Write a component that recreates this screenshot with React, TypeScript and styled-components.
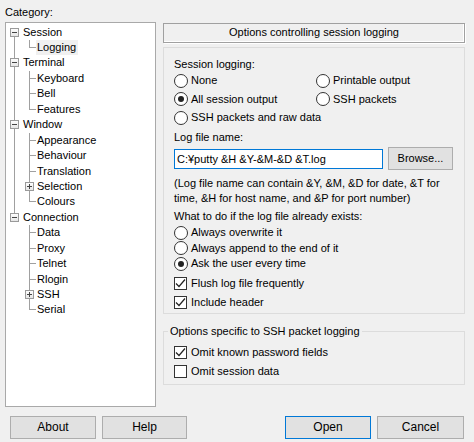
import React from "react";
import styled, { createGlobalStyle, css } from "styled-components";

const Global = createGlobalStyle`
  html, body { margin: 0; padding: 0; background: #f0f0f0; }
  body { font-family: "Liberation Sans", Arial, sans-serif; font-size: 11px; color: #000; }
  * { box-sizing: border-box; }
`;

const Page = styled.div`
  width: 474px;
  height: 442px;
  display: grid;
  grid-template-columns: 151px 302px;
  grid-template-rows: auto auto;
  column-gap: 7px;
  padding: 0 9px 0 5px;
`;

const LeftColumn = styled.div`
  padding-top: 5px;
  display: flex;
  flex-direction: column;
`;

const CategoryLabel = styled.div`
  line-height: 15px;
  height: 15px;
  margin-bottom: 2px;
`;

const TreeBox = styled.div`
  height: 385px;
  background: #fff;
  border: 1px solid #a9a9a9;
  padding-top: 1.6px;
`;

const TreeRow = styled.div`
  display: flex;
  align-items: stretch;
  height: 15.44px;
  line-height: 15px;
  white-space: nowrap;
`;

type GuideProps = { $w: number; $up?: boolean; $down?: boolean; $right?: boolean };

const Guide = styled.span<GuideProps>`
  position: relative;
  flex: none;
  width: ${(p) => p.$w}px;
  ${(p) =>
    (p.$up || p.$down) &&
    css`
      &::before {
        content: "";
        position: absolute;
        left: ${Math.floor(p.$w / 2)}px;
        top: ${p.$up ? "0" : "50%"};
        bottom: ${p.$down ? "0" : "50%"};
        border-left: 1px solid #a0a0a0;
      }
    `}
  ${(p) =>
    p.$right &&
    css`
      &::after {
        content: "";
        position: absolute;
        left: ${Math.floor(p.$w / 2)}px;
        right: 0;
        top: 7px;
        border-top: 1px solid #a0a0a0;
      }
    `}
`;

const ExpandBox = styled.span<{ $w: number; $plus?: boolean }>`
  position: absolute;
  z-index: 1;
  left: ${(p) => Math.floor(p.$w / 2) - 4}px;
  top: 3px;
  width: 9px;
  height: 9px;
  border: 1px solid #9a9a9a;
  background: linear-gradient(#fdfdfd, #e6e6e6);
  &::before {
    content: "";
    position: absolute;
    left: 1px;
    right: 1px;
    top: 3px;
    border-top: 1px solid #444;
  }
  ${(p) =>
    p.$plus &&
    css`
      &::after {
        content: "";
        position: absolute;
        top: 1px;
        bottom: 1px;
        left: 3px;
        border-left: 1px solid #444;
      }
    `}
`;

const TreeLabel = styled.span<{ $selected?: boolean }>`
  padding: 0 2px 0 1px;
  margin-left: 0;
  ${(p) => p.$selected && css`background: #f0f0f0;`}
`;

const RightColumn = styled.div`
  padding-top: 23px;
  display: flex;
  flex-direction: column;
`;

const HeaderBox = styled.div`
  height: 20px;
  border: 1px solid #a0a0a0;
  box-shadow: inset -1px -1px 0 #fff, 1px 1px 0 #fff;
  text-align: center;
  line-height: 17px;
`;

const Group = styled.div`
  margin-top: 4px;
  height: 267px;
  border: 1px solid #dcdcdc;
  padding: 8.5px 8px 0 10px;
`;

const Text = styled.div<{ $mt?: number }>`
  line-height: 15px;
  margin-top: ${(p) => p.$mt ?? 0}px;
  white-space: nowrap;
`;

const RadioGrid = styled.div`
  display: grid;
  grid-template-columns: 142px auto;
  grid-auto-rows: 18.6px;
`;

const OptionList = styled.div<{ $row: number; $mt?: number }>`
  display: grid;
  grid-auto-rows: ${(p) => p.$row}px;
  margin-top: ${(p) => p.$mt ?? 0}px;
`;

const Option = styled.label`
  display: flex;
  align-items: center;
  gap: 3px;
  white-space: nowrap;
  line-height: 15px;
`;

const RadioCircle = styled.span<{ $on?: boolean }>`
  flex: none;
  width: 14px;
  height: 14px;
  border-radius: 50%;
  border: 1px solid #333;
  background: #fff;
  display: flex;
  align-items: center;
  justify-content: center;
  &::after {
    content: "";
    width: 6px;
    height: 6px;
    border-radius: 50%;
    background: ${(p) => (p.$on ? "#222" : "transparent")};
  }
`;

const CheckSquare = styled.span`
  flex: none;
  width: 13px;
  height: 13px;
  border: 1px solid #333;
  background: #fff;
  margin-right: 1px;
  display: flex;
  align-items: center;
  justify-content: center;
`;

const FileRow = styled.div`
  display: flex;
  align-items: center;
  gap: 5px;
  height: 23px;
  margin-top: 2.5px;
`;

const FileInput = styled.div`
  width: 209px;
  height: 20px;
  border: 1px solid #0078d7;
  background: #fff;
  padding-left: 2px;
  line-height: 18px;
  white-space: nowrap;
`;

const Button = styled.div<{ $w: number; $default?: boolean }>`
  width: ${(p) => p.$w}px;
  height: 23px;
  flex: none;
  background: #e1e1e1;
  border: 1px solid ${(p) => (p.$default ? "#0078d7" : "#adadad")};
  text-align: center;
  line-height: 21px;
  font-size: 12px;
`;

const BrowseButton = styled(Button)`
  font-size: 11px;
`;

const FieldGroup = styled.fieldset`
  margin: 9.5px 0 0;
  padding: 0 8px 2px 4px;
  border: 1px solid #dcdcdc;
  min-width: 0;
  legend {
    padding: 0 2px;
    line-height: 15px;
  }
`;

const Legend = styled.legend`
  padding: 0 2px;
  line-height: 15px;
  font-size: 11px;
`;

const ButtonBar = styled.div`
  grid-column: 1 / -1;
  margin-top: 6px;
  display: flex;
  justify-content: space-between;
  padding: 0 1px 0 5px;
`;

const ButtonPair = styled.div`
  display: flex;
  gap: 6px;
`;

const Check = () => (
  <svg width="11" height="11" viewBox="0 0 11 11">
    <path d="M1 5.5 L4 8.5 L10 1.5" fill="none" stroke="#222" strokeWidth="1.2" />
  </svg>
);

type G = { up?: boolean; down?: boolean; right?: boolean; box?: "+" | "-" } | null;
type Row = { label: string; c1: G; c2?: G; selected?: boolean };

const thru: G = { up: true, down: true };
const tee: G = { up: true, down: true, right: true };
const elbow: G = { up: true, right: true };

const rows: Row[] = [
  { label: "Session", c1: { down: true, box: "-" } },
  { label: "Logging", c1: thru, c2: elbow, selected: true },
  { label: "Terminal", c1: { up: true, down: true, box: "-" } },
  { label: "Keyboard", c1: thru, c2: tee },
  { label: "Bell", c1: thru, c2: tee },
  { label: "Features", c1: thru, c2: elbow },
  { label: "Window", c1: { up: true, down: true, box: "-" } },
  { label: "Appearance", c1: thru, c2: tee },
  { label: "Behaviour", c1: thru, c2: tee },
  { label: "Translation", c1: thru, c2: tee },
  { label: "Selection", c1: thru, c2: { up: true, down: true, box: "+" } },
  { label: "Colours", c1: thru, c2: elbow },
  { label: "Connection", c1: { up: true, box: "-" } },
  { label: "Data", c1: null, c2: tee },
  { label: "Proxy", c1: null, c2: tee },
  { label: "Telnet", c1: null, c2: tee },
  { label: "Rlogin", c1: null, c2: tee },
  { label: "SSH", c1: null, c2: { up: true, down: true, box: "+" } },
  { label: "Serial", c1: null, c2: elbow },
];

const GuideCell = ({ g, w }: { g: G; w: number }) => (
  <Guide $w={w} $up={g?.up} $down={g?.down} $right={g?.right}>
    {g?.box && <ExpandBox $w={w} $plus={g.box === "+"} />}
  </Guide>
);

const Radio = ({ on, children }: { on?: boolean; children: React.ReactNode }) => (
  <Option>
    <RadioCircle $on={on} />
    {children}
  </Option>
);

const CheckBox = ({ on, children }: { on?: boolean; children: React.ReactNode }) => (
  <Option>
    <CheckSquare>{on && <Check />}</CheckSquare>
    {children}
  </Option>
);

export default function App() {
  return (
    <>
      <Global />
      <Page>
        <LeftColumn>
          <CategoryLabel>Category:</CategoryLabel>
          <TreeBox>
            {rows.map((r) => (
              <TreeRow key={r.label}>
                <GuideCell g={r.c1} w={16} />
                {r.c2 !== undefined && <GuideCell g={r.c2} w={14} />}
                <TreeLabel $selected={r.selected}>{r.label}</TreeLabel>
              </TreeRow>
            ))}
          </TreeBox>
        </LeftColumn>
        <RightColumn>
          <HeaderBox>Options controlling session logging</HeaderBox>
          <Group>
            <Text>Session logging:</Text>
            <RadioGrid>
              <Radio>None</Radio>
              <Radio>Printable output</Radio>
              <Radio on>All session output</Radio>
              <Radio>SSH packets</Radio>
              <Radio>SSH packets and raw data</Radio>
            </RadioGrid>
            <Text $mt={2.4}>Log file name:</Text>
            <FileRow>
              <FileInput>C:¥putty &amp;H &amp;Y-&amp;M-&amp;D &amp;T.log</FileInput>
              <BrowseButton $w={65}>Browse...</BrowseButton>
            </FileRow>
            <Text $mt={5.5}>
              (Log file name can contain &amp;Y, &amp;M, &amp;D for date, &amp;T for
              <br />
              time, &amp;H for host name, and &amp;P for port number)
            </Text>
            <Text $mt={3.5}>What to do if the log file already exists:</Text>
            <OptionList $row={15.6} $mt={0.7}>
              <Radio>Always overwrite it</Radio>
              <Radio>Always append to the end of it</Radio>
              <Radio on>Ask the user every time</Radio>
            </OptionList>
            <OptionList $row={19} $mt={2.4}>
              <CheckBox on>Flush log file frequently</CheckBox>
              <CheckBox on>Include header</CheckBox>
            </OptionList>
          </Group>
          <FieldGroup>
            <Legend>Options specific to SSH packet logging</Legend>
            <OptionList $row={19.7} $mt={3.7} style={{ paddingLeft: 6 }}>
              <CheckBox on>Omit known password fields</CheckBox>
              <CheckBox>Omit session data</CheckBox>
            </OptionList>
          </FieldGroup>
        </RightColumn>
        <ButtonBar>
          <ButtonPair>
            <Button $w={86}>About</Button>
            <Button $w={85}>Help</Button>
          </ButtonPair>
          <ButtonPair>
            <Button $w={86} $default>Open</Button>
            <Button $w={87}>Cancel</Button>
          </ButtonPair>
        </ButtonBar>
      </Page>
    </>
  );
}
